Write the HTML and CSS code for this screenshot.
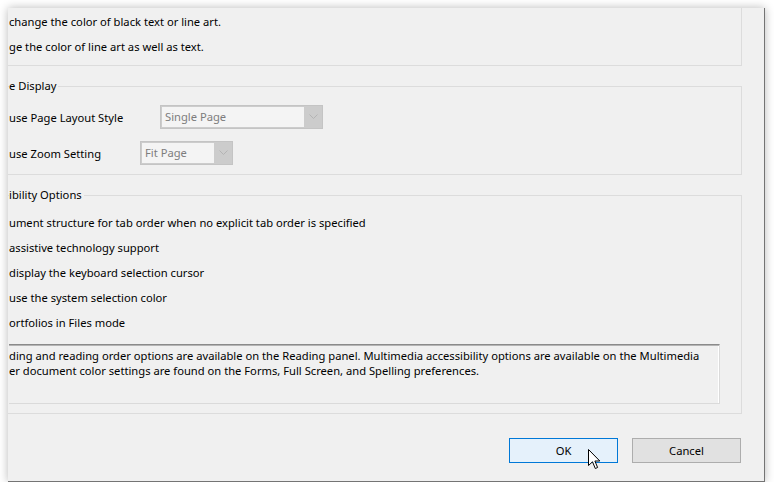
FILE: index.html
```html
<!DOCTYPE html>
<html lang="en">
<head>
  <meta charset="UTF-8">
  <meta name="viewport" content="width=device-width, initial-scale=1.0">
  <title>Preferences - Accessibility</title>
  <link rel="stylesheet" href="styles.css">
</head>
<body>

  <div class="window">

    <div class="group group-first">
      <div class="line">change the color of black text or line art.</div>
      <div class="line">ge the color of line art as well as text.</div>
    </div>

    <div class="group">
      <div class="legend">e Display</div>
      <div class="row row-first">
        <span class="label label-layout">use Page Layout Style</span>
        <div class="combo combo-layout">
          <span class="combo-field">Single Page</span>
          <span class="combo-arrow">
            <svg width="9" height="6" viewBox="0 0 9 6"><path d="M0.5 0.5 L4.5 4.5 L8.5 0.5" fill="none" stroke="#b4b4b4" stroke-width="1"/></svg>
          </span>
        </div>
      </div>
      <div class="row">
        <span class="label label-zoom">use Zoom Setting</span>
        <div class="combo combo-zoom">
          <span class="combo-field">Fit Page</span>
          <span class="combo-arrow">
            <svg width="9" height="6" viewBox="0 0 9 6"><path d="M0.5 0.5 L4.5 4.5 L8.5 0.5" fill="none" stroke="#b4b4b4" stroke-width="1"/></svg>
          </span>
        </div>
      </div>
    </div>

    <div class="group group-last">
      <div class="legend">ibility Options</div>
      <div class="items">
        <div class="line">ument structure for tab order when no explicit tab order is specified</div>
        <div class="line">assistive technology support</div>
        <div class="line">display the keyboard selection cursor</div>
        <div class="line">use the system selection color</div>
        <div class="line">ortfolios in Files mode</div>
      </div>
      <div class="note">
        <div>ding and reading order options are available on the Reading panel. Multimedia accessibility options are available on the Multimedia</div>
        <div>er document color settings are found on the Forms, Full Screen, and Spelling preferences.</div>
      </div>
    </div>

    <div class="buttons">
      <button class="btn btn-default">OK</button>
      <button class="btn">Cancel</button>
    </div>

    <!-- mouse pointer over the OK button -->
    <svg class="cursor" width="13" height="21" viewBox="0 0 13 21">
      <path d="M0.5 0.5 L0.5 16.5 L4.5 12.8 L7.3 19.5 L9.6 18.5 L6.9 12 L11.8 12 Z" fill="#fff" stroke="#000" stroke-width="1" stroke-linejoin="round"/>
    </svg>
  </div>

</body>
</html>
```

FILE: styles.css
```css
body {
  margin: 0;
  background-color: #fff;
  font-family: "Noto Sans", "Open Sans", sans-serif;
  font-size: 11.2px;
  color: #000;
  overflow: hidden;
}

.window {
  position: relative;
  margin: 8px 0 0 8px;
  width: 756px;
  height: 473px;
  background-color: #f0f0f0;
  border-right: 1px solid #747474;
  border-bottom: 1px solid #747474;
  box-shadow: 0 0 9px rgba(0, 0, 0, 0.28);
  overflow: hidden;
  display: flex;
  flex-direction: column;
}

.group {
  display: flex;
  flex-direction: column;
  margin-right: 22px;
  padding-left: 1px;
  border-top: 1px solid #dcdcdc;
  border-right: 1px solid #dcdcdc;
  border-bottom: 1px solid #dcdcdc;
  margin-top: 20px;
  white-space: nowrap;
}

.group-first {
  border-top: none;
  margin-top: 0;
  padding-top: 1px;
  padding-bottom: 6px;
}

.line {
  height: 25px;
  line-height: 25px;
}

.legend {
  align-self: flex-start;
  height: 16px;
  line-height: 16px;
  margin-top: -9px;
  padding-right: 2px;
  background-color: #f0f0f0;
}

.row {
  display: flex;
  align-items: center;
  height: 24px;
  margin-top: 12px;
}

.row-first {
  margin-top: 11px;
}

.row:last-child {
  margin-bottom: 9px;
}

.label-layout {
  width: 151px;
}

.label-zoom {
  width: 131px;
}

.combo {
  display: flex;
  height: 22px;
  background-color: #cccccc;
  border: 1px solid #c4c4c4;
}

.combo-layout {
  width: 161px;
}

.combo-zoom {
  width: 91px;
}

.combo-field {
  flex: 1;
  margin: 1px 0 1px 1px;
  padding-left: 3px;
  background-color: #f4f4f4;
  color: #7d7d7d;
  line-height: 20px;
}

.combo-arrow {
  width: 18px;
  display: flex;
  align-items: center;
  justify-content: center;
}

.items {
  margin-top: 7px;
}

.note {
  margin: 9px 21px 9px 0;
  height: 55px;
  padding-top: 3px;
  border-top: 1px solid #8a8a8a;
  border-right: 1px solid #dadada;
  border-bottom: 1px solid #dadada;
  box-shadow: inset 0 1px 0 #b4b4b4, -1px 0 0 #fff inset;
  line-height: 15px;
}

.buttons {
  display: flex;
  justify-content: flex-end;
  gap: 14px;
  margin: 24px 23px 0 0;
}

.btn {
  width: 109px;
  height: 25px;
  padding: 0;
  font-family: inherit;
  font-size: 11.2px;
  color: #000;
  background-color: #e1e1e1;
  border: 1px solid #adadad;
}

.btn-default {
  background-color: #e5f1fb;
  border-color: #0078d7;
}

.cursor {
  position: absolute;
  left: 580px;
  top: 441px;
}
```
